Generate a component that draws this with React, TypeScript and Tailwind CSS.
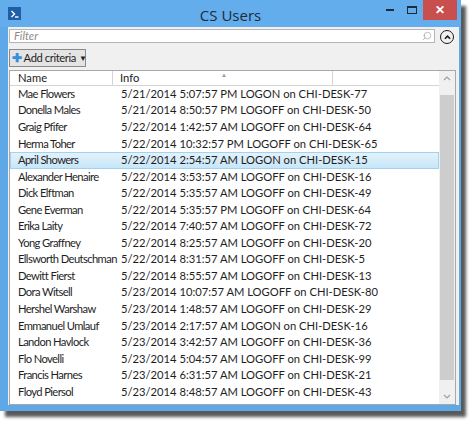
import { Search } from "lucide-react";

const rows: [string, string][] = [
  ["Mae Flowers", "5/21/2014 5:07:57 PM LOGON on CHI-DESK-77"],
  ["Donella Males", "5/21/2014 8:50:57 PM LOGOFF on CHI-DESK-50"],
  ["Graig Pfifer", "5/22/2014 1:42:57 AM LOGOFF on CHI-DESK-64"],
  ["Herma Toher", "5/22/2014 10:32:57 PM LOGOFF on CHI-DESK-65"],
  ["April Showers", "5/22/2014 2:54:57 AM LOGON on CHI-DESK-15"],
  ["Alexander Henaire", "5/22/2014 3:53:57 AM LOGOFF on CHI-DESK-16"],
  ["Dick Elftman", "5/22/2014 5:35:57 AM LOGOFF on CHI-DESK-49"],
  ["Gene Everman", "5/22/2014 5:35:57 PM LOGOFF on CHI-DESK-64"],
  ["Erika Laity", "5/22/2014 7:40:57 AM LOGOFF on CHI-DESK-72"],
  ["Yong Graffney", "5/22/2014 8:25:57 AM LOGOFF on CHI-DESK-20"],
  ["Ellsworth Deutschman", "5/22/2014 8:31:57 AM LOGOFF on CHI-DESK-5"],
  ["Dewitt Fierst", "5/22/2014 8:55:57 AM LOGOFF on CHI-DESK-13"],
  ["Dora Witsell", "5/23/2014 10:07:57 AM LOGOFF on CHI-DESK-80"],
  ["Hershel Warshaw", "5/23/2014 1:48:57 AM LOGOFF on CHI-DESK-29"],
  ["Emmanuel Umlauf", "5/23/2014 2:17:57 AM LOGON on CHI-DESK-16"],
  ["Landon Havlock", "5/23/2014 3:42:57 AM LOGOFF on CHI-DESK-36"],
  ["Flo Novelli", "5/23/2014 5:04:57 AM LOGOFF on CHI-DESK-99"],
  ["Francis Harnes", "5/23/2014 6:31:57 AM LOGOFF on CHI-DESK-21"],
  ["Floyd Piersol", "5/23/2014 8:48:57 AM LOGOFF on CHI-DESK-43"],
];

export default function App() {
  return (
    <div className="h-[427px] w-[474px] bg-white font-['Lato',sans-serif] text-[11.2px] text-[#1e1e1e]">
      {/* Window */}
      <div className="flex h-[411px] w-[461px] flex-col bg-[#5ea8e8] shadow-[5px_6px_3px_rgba(0,0,0,0.65)]">
        {/* Title bar */}
        <div className="relative flex h-[27px] items-center bg-[#63adec]">
          <div className="ml-[8px] flex h-[13px] w-[13px] items-center justify-center bg-[#1f5fa8]">
            <svg className="h-[10px] w-[10px]" viewBox="0 0 10 10" fill="none" stroke="white" strokeWidth="1.4">
              <path d="M1.5 2l3 3-3 3" />
              <path d="M5 8h3.5" />
            </svg>
          </div>
          <div className="absolute left-0 right-0 top-[4px] text-center font-['Open_Sans',sans-serif] text-[15px] text-[#1c2b3a]">
            CS Users
          </div>
          <div className="ml-auto flex h-full items-start">
            <div className="flex h-[20px] w-[22px] items-center justify-center">
              <div className="h-[2px] w-[8px] bg-[#1c2b3a]" />
            </div>
            <div className="flex h-[20px] w-[22px] items-center justify-center">
              <div className="h-[8px] w-[10px] border border-t-2 border-[#1c2b3a]" />
            </div>
            <div className="mr-[4px] flex h-[20px] w-[34px] items-center justify-center bg-[#c94f4f] text-[12px] font-bold text-white">
              ✕
            </div>
          </div>
        </div>

        {/* Body */}
        <div className="mb-[6px] ml-[8px] mr-[2px] flex flex-1 flex-col bg-[#f0f0f0]">
          {/* Filter row */}
          <div className="flex items-center">
            <div className="ml-[1px] flex h-[14px] w-[426px] items-center border border-[#b5b5b5] bg-white pl-[4px] pr-[2px]">
              <span className="italic leading-none text-[#8a8a8a]">Filter</span>
              <Search className="ml-auto h-[10px] w-[10px] -scale-x-100 text-[#9a9a9a]" strokeWidth={1.6} />
            </div>
            <div className="ml-[5px] mt-[3px] flex h-[14px] w-[14px] items-center justify-center rounded-full border-[1.5px] border-[#1a1a1a]">
              <svg className="h-[7px] w-[7px]" viewBox="0 0 8 8" fill="none" stroke="#1a1a1a" strokeWidth="1.8">
                <path d="M1 5.5l3-3 3 3" />
              </svg>
            </div>
          </div>

          {/* Add criteria */}
          <div className="mt-[5px] ml-[1px] flex h-[18px] w-[77px] items-center whitespace-nowrap border border-[#8a8a8a] bg-[#e4e4e4] pl-[2px] tracking-[-0.4px]">
            <span className="text-[12px] font-bold leading-none text-[#3a8ed8]">✚</span>
            <span className="ml-[2px] leading-none">Add criteria</span>
            <span className="ml-[3px] text-[8px] leading-none">▼</span>
          </div>

          {/* List */}
          <div className="mt-[3px] ml-[1px] mr-[3px] flex flex-1 overflow-hidden border border-[#a8a8a8] bg-white">
            <div className="flex flex-1 flex-col">
              <div className="flex h-[15px] items-center border-b border-[#d5d5d5] text-[#222]">
                <div className="flex h-full w-[103px] items-center border-r border-[#d5d5d5] pl-[8px]">Name</div>
                <div className="relative flex h-full w-[220px] items-center border-r border-[#d5d5d5] pl-[7px]">
                  Info
                  <span className="absolute left-[108px] top-[-1px] text-[6px] text-[#999]">▲</span>
                </div>
              </div>
              <div className="flex flex-col">
                {rows.map(([name, info], i) => (
                  <div
                    key={name}
                    className={
                      i === 4
                        ? "flex h-[16.55px] items-center whitespace-nowrap border border-[#9fd3f2] bg-gradient-to-b from-[#e3f2fc] to-[#c8e6f8]"
                        : "flex h-[16.55px] items-center whitespace-nowrap border border-transparent"
                    }
                  >
                    <div className="w-[103px] pl-[7px] tracking-[-0.6px]">{name}</div>
                    <div className="pl-[7px]">{info}</div>
                  </div>
                ))}
              </div>
            </div>
            {/* Scrollbar */}
            <div className="flex w-[16px] flex-col items-center bg-[#f0f0f0]">
              <svg className="mt-[5px] h-[5px] w-[8px]" viewBox="0 0 8 5" fill="none" stroke="#a0a0a0" strokeWidth="1.2">
                <path d="M1 4l3-3 3 3" />
              </svg>
              <div className="mt-[14px] h-[285px] w-[14px] bg-[#cdcdcd]" />
              <svg className="mb-[5px] mt-auto h-[5px] w-[8px]" viewBox="0 0 8 5" fill="none" stroke="#a0a0a0" strokeWidth="1.2">
                <path d="M1 1l3 3 3-3" />
              </svg>
            </div>
          </div>
        </div>
      </div>
    </div>
  );
}
